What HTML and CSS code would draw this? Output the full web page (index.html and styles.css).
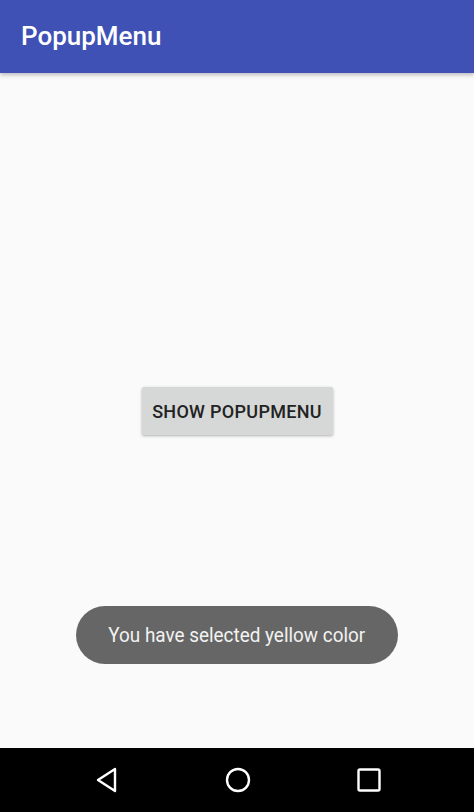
FILE: index.html
```html
<!DOCTYPE html>
<html>
<head>
<meta charset="utf-8">
<link rel="stylesheet" href="styles.css">
</head>
<body>
<div class="screen">
  <header class="appbar">
    <h1 class="title">PopupMenu</h1>
  </header>
  <main class="content">
    <button class="btn">SHOW POPUPMENU</button>
    <div class="toast"><span class="toast-text">You have selected yellow color</span></div>
  </main>
  <nav class="navbar">
    <svg class="nav-icon" width="24" height="26" viewBox="0 0 24 26"><path d="M20 2 L3 13 L20 24 Z" fill="none" stroke="#fff" stroke-width="2.4" stroke-linejoin="round"/></svg>
    <svg class="nav-icon" width="26" height="26" viewBox="0 0 26 26"><circle cx="13" cy="13" r="11" fill="none" stroke="#fff" stroke-width="2.4"/></svg>
    <svg class="nav-icon" width="24" height="24" viewBox="0 0 24 24"><rect x="1.5" y="1.5" width="21" height="21" rx="1.5" fill="none" stroke="#fff" stroke-width="2.4"/></svg>
  </nav>
</div>
</body>
</html>
```

FILE: styles.css
```css
html, body {
  margin: 0;
  padding: 0;
}
body {
  font-family: Roboto, "Noto Sans", sans-serif;
  background: #fafafa;
}
.screen {
  width: 474px;
  height: 812px;
  display: flex;
  flex-direction: column;
  overflow: hidden;
}
.appbar {
  height: 73px;
  flex: 0 0 73px;
  background: #3f51b5;
  display: flex;
  align-items: center;
  padding-left: 21px;
  box-shadow: 0 2px 4px rgba(0,0,0,0.25);
  position: relative;
  z-index: 1;
}
.title {
  margin: 0;
  color: #fff;
  font-size: 26px;
  font-weight: 500;
  padding-bottom: 1px;
}
.content {
  flex: 1;
  position: relative;
  display: flex;
  align-items: center;
  justify-content: center;
  background: #fafafa;
}
.btn {
  width: 191px;
  height: 48px;
  margin-top: 1px;
  border: none;
  border-radius: 2px;
  background: #d6d7d7;
  color: #222;
  font-family: Roboto, sans-serif;
  font-size: 18px;
  font-weight: 500;
  letter-spacing: 0.3px;
  padding: 0;
  box-shadow: 0 1px 3px rgba(0,0,0,0.3);
}
.toast {
  position: absolute;
  left: 76px;
  bottom: 84px;
  width: 322px;
  height: 58px;
  border-radius: 29px;
  background: #666666;
  color: #f2f2f2;
  display: flex;
  align-items: center;
  justify-content: center;
}
.toast-text {
  display: inline-block;
  font-size: 21px;
  transform: scaleX(0.9);
  white-space: nowrap;
}
.navbar {
  height: 64px;
  flex: 0 0 64px;
  background: #000;
  display: grid;
  grid-template-columns: 24px 26px 24px;
  justify-content: space-between;
  align-items: center;
  padding: 0 93px 0 95px;
}
.nav-icon {
  display: block;
}
```
